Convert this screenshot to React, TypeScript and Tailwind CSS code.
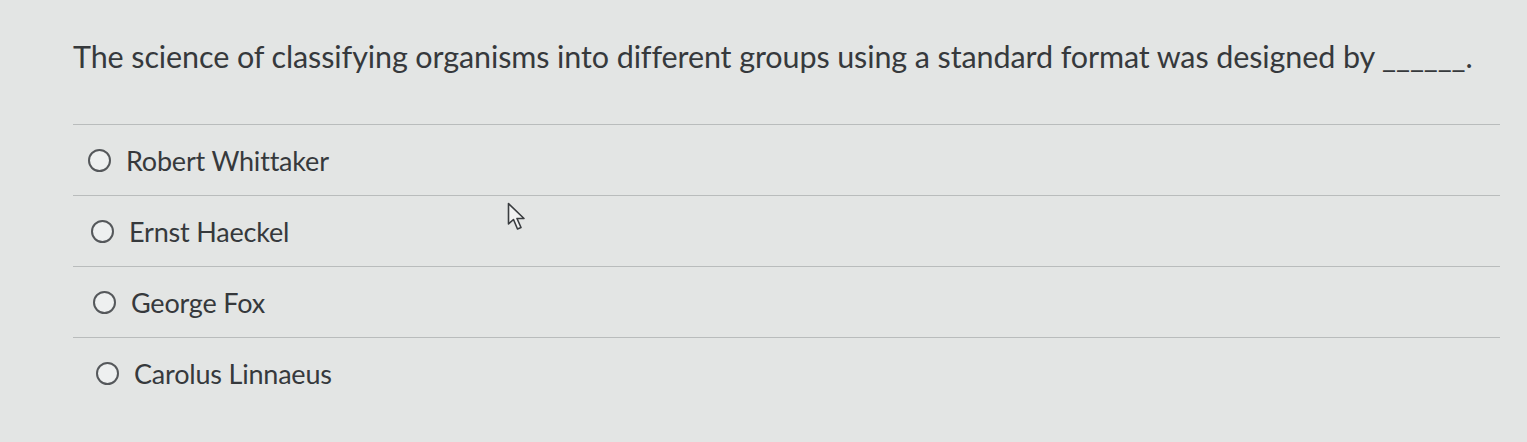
import React from "react";

const options = [
  { label: "Robert Whittaker", pad: "pl-[15px]" },
  { label: "Ernst Haeckel", pad: "pl-[18px]" },
  { label: "George Fox", pad: "pl-[20px]" },
  { label: "Carolus Linnaeus", pad: "pl-[23px]" },
];

function Radio() {
  return <span className="block w-[23px] h-[23px] rounded-full border-2 border-[#55585b] bg-[#eef0f0] shrink-0" />;
}

export default function App() {
  return (
    <div
      className="relative w-[1527px] h-[442px] bg-[#e3e5e4] text-[#36393c] overflow-hidden"
      style={{ fontFamily: "Lato, 'Open Sans', sans-serif" }}
    >
      <div className="pl-[73px] pr-[27px] pt-[35px]">
        <p className="text-[30.5px] leading-[42px] tracking-[-0.1px]">
          The science of classifying organisms into different groups using a standard format was designed by ______.
        </p>
        <div className="mt-[47px] border-t border-[#b9bcbc]">
          {options.map((o, i) => (
            <div
              key={o.label}
              className={`flex items-center gap-[15px] h-[71px] ${o.pad} ${i < options.length - 1 ? "border-b border-[#b9bcbc]" : ""}`}
            >
              <Radio />
              <span className="text-[27px] leading-none tracking-[-0.2px]">{o.label}</span>
            </div>
          ))}
        </div>
      </div>
      <svg
        className="absolute left-[507px] top-[202px]"
        width="22"
        height="30"
        viewBox="0 0 22 30"
      >
        <path
          d="M1.5 1.5 L1.5 22 L6.5 17.5 L10.5 27 L14 25.5 L10 16.5 L17 16.5 Z"
          fill="#f2f3f3"
          stroke="#3a3d40"
          strokeWidth="1.6"
          strokeLinejoin="round"
        />
      </svg>
    </div>
  );
}
